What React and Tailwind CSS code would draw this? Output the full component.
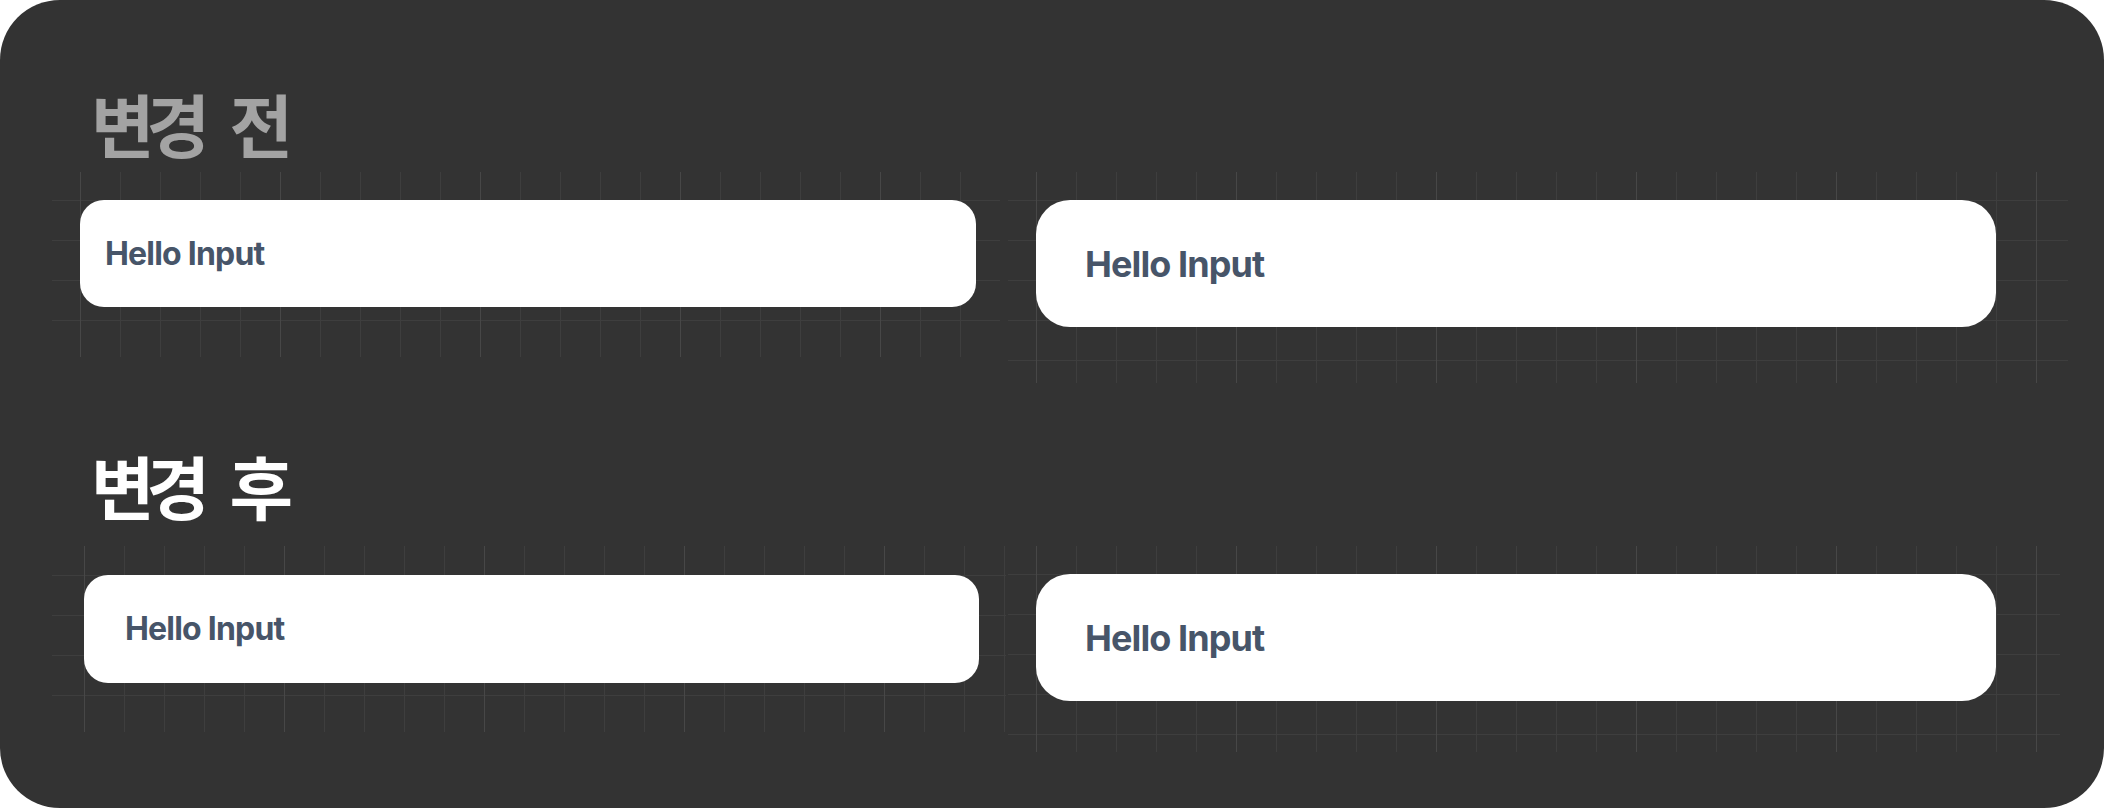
const gridBg =
  'bg-[linear-gradient(to_right,#474747_1px,transparent_1px),linear-gradient(to_right,#3e3e3e_1px,transparent_1px),linear-gradient(to_bottom,#3e3e3e_1px,transparent_1px)]';

function GridBox({ className = '', children }) {
  return (
    <div
      className={`${gridBg} [background-size:200px_100%,40px_100%,100%_40px] [background-position:28px_0,28px_0,0_28px] ${className}`}
    >
      {children}
    </div>
  );
}

function FakeInput({ className = '' }) {
  return (
    <div
      className={`flex items-center bg-white font-bold tracking-[-0.025em] text-[#475569] ${className}`}
      style={{ fontFamily: 'Inter, "Noto Sans", sans-serif' }}
    >
      Hello Input
    </div>
  );
}

function Heading({ children, className = '' }) {
  return (
    <h2
      className={`ml-[39px] h-[64px] text-[69px] leading-none font-bold tracking-[-8px] [word-spacing:20px] ${className}`}
      style={{ fontFamily: '"Noto Sans CJK KR", "Noto Sans", sans-serif' }}
    >
      {children}
    </h2>
  );
}

export default function App() {
  return (
    <div className="w-[2104px] h-[808px] bg-white">
      <div className="flex h-full w-full flex-col rounded-[60px] bg-[#333333] pl-[52px] pt-[89px]">
        <Heading className="text-[#a3a3a3]">변경 전</Heading>

        <div className="mt-[19px] flex items-start gap-[8px]">
          <GridBox className="h-[185px] w-[948px] pl-[28px] pt-[28px]">
            <FakeInput className="h-[107px] w-[896px] rounded-[24px] pl-[25px] text-[32px]" />
          </GridBox>
          <GridBox className="h-[211px] w-[1060px] pl-[28px] pt-[28px]">
            <FakeInput className="h-[127px] w-[960px] rounded-[34px] pl-[49px] text-[36px]" />
          </GridBox>
        </div>

        <Heading className="mt-[68px] text-white">변경 후</Heading>

        <div className="mt-[31px] flex items-start gap-[2px]">
          <GridBox className="h-[186px] w-[954px] pl-[32px] pt-[29px] [background-position:32px_0,32px_0,0_29px]">
            <FakeInput className="h-[108px] w-[895px] rounded-[24px] pl-[41px] text-[32px]" />
          </GridBox>
          <GridBox className="h-[206px] w-[1052px] pl-[28px] pt-[28px]">
            <FakeInput className="h-[127px] w-[960px] rounded-[34px] pl-[49px] text-[36px]" />
          </GridBox>
        </div>
      </div>
    </div>
  );
}
